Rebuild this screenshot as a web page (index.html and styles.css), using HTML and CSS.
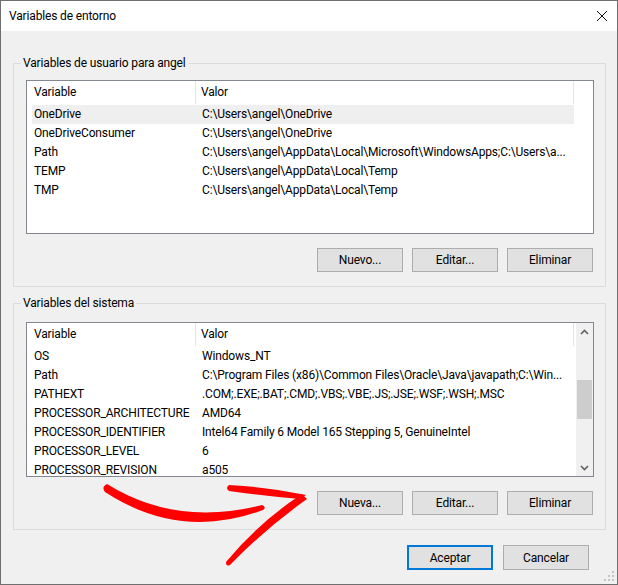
FILE: index.html
```html
<!DOCTYPE html>
<html lang="es">
  <head>
    <meta charset="UTF-8" />
    <meta name="viewport" content="width=device-width, initial-scale=1.0" />
    <title>Variables de entorno</title>
    <link rel="stylesheet" href="styles.css">
  </head>
  <body>
    <div class="window">
      <div class="titlebar">
        <span class="title">Variables de entorno</span>
        <svg class="close" width="12" height="12" viewBox="0 0 12 12">
          <path d="M1 1 L11 11 M11 1 L1 11" stroke="#111" stroke-width="1" fill="none" />
        </svg>
      </div>

      <div class="content">
        <fieldset class="group">
          <legend>Variables de usuario para angel</legend>
          <div class="listview">
            <div class="lv-header">
              <div class="hcell">Variable</div>
              <div class="hcell">Valor</div>
            </div>
            <div class="lv-row selected"><div>OneDrive</div><div>C:\Users\angel\OneDrive</div></div>
            <div class="lv-row"><div>OneDriveConsumer</div><div>C:\Users\angel\OneDrive</div></div>
            <div class="lv-row"><div>Path</div><div>C:\Users\angel\AppData\Local\Microsoft\WindowsApps;C:\Users\a...</div></div>
            <div class="lv-row"><div>TEMP</div><div>C:\Users\angel\AppData\Local\Temp</div></div>
            <div class="lv-row"><div>TMP</div><div>C:\Users\angel\AppData\Local\Temp</div></div>
          </div>
          <div class="actions">
            <button>Nuevo...</button>
            <button>Editar...</button>
            <button>Eliminar</button>
          </div>
        </fieldset>

        <fieldset class="group">
          <legend>Variables del sistema</legend>
          <div class="listview scrolling">
            <div class="lv-body">
              <div class="lv-header">
                <div class="hcell">Variable</div>
                <div class="hcell">Valor</div>
              </div>
              <div class="lv-row"><div>OS</div><div>Windows_NT</div></div>
              <div class="lv-row"><div>Path</div><div>C:\Program Files (x86)\Common Files\Oracle\Java\javapath;C:\Win...</div></div>
              <div class="lv-row"><div>PATHEXT</div><div>.COM;.EXE;.BAT;.CMD;.VBS;.VBE;.JS;.JSE;.WSF;.WSH;.MSC</div></div>
              <div class="lv-row"><div>PROCESSOR_ARCHITECTURE</div><div>AMD64</div></div>
              <div class="lv-row"><div>PROCESSOR_IDENTIFIER</div><div>Intel64 Family 6 Model 165 Stepping 5, GenuineIntel</div></div>
              <div class="lv-row"><div>PROCESSOR_LEVEL</div><div>6</div></div>
              <div class="lv-row"><div>PROCESSOR_REVISION</div><div>a505</div></div>
            </div>
            <div class="scrollbar">
              <div class="sb-arrow">
                <svg width="9" height="6" viewBox="0 0 9 6"><path d="M1 5 L4.5 1.5 L8 5" stroke="#606060" stroke-width="1.6" fill="none" /></svg>
              </div>
              <div class="sb-track">
                <div class="sb-thumb"></div>
              </div>
              <div class="sb-arrow">
                <svg width="9" height="6" viewBox="0 0 9 6"><path d="M1 1 L4.5 4.5 L8 1" stroke="#606060" stroke-width="1.6" fill="none" /></svg>
              </div>
            </div>
          </div>
          <div class="actions">
            <button>Nueva...</button>
            <button>Editar...</button>
            <button>Eliminar</button>
          </div>
        </fieldset>

        <div class="dialog-actions">
          <button class="default">Aceptar</button>
          <button>Cancelar</button>
        </div>
      </div>

      <!-- size grip -->
      <svg class="grip" width="10" height="10" viewBox="0 0 10 10">
        <rect x="8" y="0" width="2" height="2" fill="#c4c4c4" />
        <rect x="4" y="4" width="2" height="2" fill="#c4c4c4" />
        <rect x="8" y="4" width="2" height="2" fill="#c4c4c4" />
        <rect x="0" y="8" width="2" height="2" fill="#c4c4c4" />
        <rect x="4" y="8" width="2" height="2" fill="#c4c4c4" />
        <rect x="8" y="8" width="2" height="2" fill="#c4c4c4" />
      </svg>

      <!-- hand drawn arrow pointing at the "Nueva..." button -->
      <svg class="scribble" width="618" height="585" viewBox="0 0 618 585">
        <defs>
          <filter id="soft"><feGaussianBlur stdDeviation="0.6" /></filter>
        </defs>
        <g fill="#ff0000" filter="url(#soft)">
          <path d="M107,484 Q176,527 262,505 Q267,507 263,510 Q180,541 105,492 Q101,487 107,484 Z" />
          <path d="M229,485 Q268,487 306,495 L300,499 Q266,496 229,491 Q225,488 229,485 Z" />
          <path d="M302,494 Q259,522 226,562 Q226,567 230,565 Q266,528 307,499 Z" />
        </g>
      </svg>
    </div>
  </body>
</html>
```

FILE: styles.css
```css
body {
  margin: 0;
  font-family: Roboto, "Noto Sans", sans-serif;
  font-size: 12px;
  letter-spacing: -0.15px;
  color: #000;
}
.window {
  position: relative;
  width: 618px;
  height: 585px;
  box-sizing: border-box;
  border: 1px solid #6f6f6f;
  background-color: #f0f0f0;
  overflow: hidden;
}
.titlebar {
  height: 30px;
  background-color: #fff;
  display: flex;
  align-items: center;
  justify-content: space-between;
  padding: 0 8px 0 8px;
}
.title {
  line-height: 16px;
}
.close {
  margin-right: 1px;
}
.content {
  padding: 24px 11px 0 12px;
}
.group {
  margin: 0 0 8px 0;
  padding: 0 11px 14px 12px;
  border: 1px solid #dcdcdc;
  min-width: 0;
}
.group legend {
  padding: 0 2px;
  margin-left: -5px;
  line-height: 16px;
}
.listview {
  margin-top: 9px;
  height: 152px;
  border: 1px solid #828790;
  background-color: #fff;
  overflow: hidden;
}
.listview.scrolling {
  display: flex;
  margin-top: 11px;
  height: 153px;
}
.lv-body {
  flex: 1;
  overflow: hidden;
}
.lv-header {
  display: grid;
  grid-template-columns: 169px 378px;
  height: 23px;
  margin-bottom: 1px;
}
.hcell {
  border-right: 1px solid #e5e5e5;
  line-height: 23px;
  padding-left: 7px;
}
.hcell + .hcell {
  padding-left: 5px;
}
.lv-row {
  display: grid;
  grid-template-columns: 164px 1fr;
  width: 542px;
  margin-left: 5px;
  height: 19px;
  line-height: 19px;
  white-space: nowrap;
}
.lv-row > div {
  overflow: hidden;
  padding-left: 2px;
}
.lv-row > div + div {
  padding-left: 6px;
}
.lv-row.selected {
  background-color: #efefef;
}
.scrollbar {
  width: 17px;
  background-color: #f0f0f0;
  display: flex;
  flex-direction: column;
}
.sb-arrow {
  height: 17px;
  display: flex;
  align-items: center;
  justify-content: center;
}
.sb-track {
  flex: 1;
  padding-top: 40px;
}
.sb-thumb {
  margin: 0 1px;
  height: 39px;
  background-color: #cdcdcd;
}
.actions {
  display: flex;
  justify-content: flex-end;
  gap: 9px;
  margin-top: 14px;
  padding-right: 1px;
}
button {
  width: 86px;
  height: 24px;
  padding: 0;
  font-family: inherit;
  font-size: 12px;
  letter-spacing: inherit;
  color: #000;
  background-color: #e1e1e1;
  border: 1px solid #adadad;
}
.dialog-actions {
  display: flex;
  justify-content: flex-end;
  gap: 10px;
  margin-top: 15px;
  padding-right: 17px;
}
.dialog-actions button {
  height: 25px;
}
button.default {
  border: 2px solid #0078d7;
}
.grip {
  position: absolute;
  right: 3px;
  bottom: 3px;
}
.scribble {
  position: absolute;
  left: -1px;
  top: -1px;
  pointer-events: none;
}
```
